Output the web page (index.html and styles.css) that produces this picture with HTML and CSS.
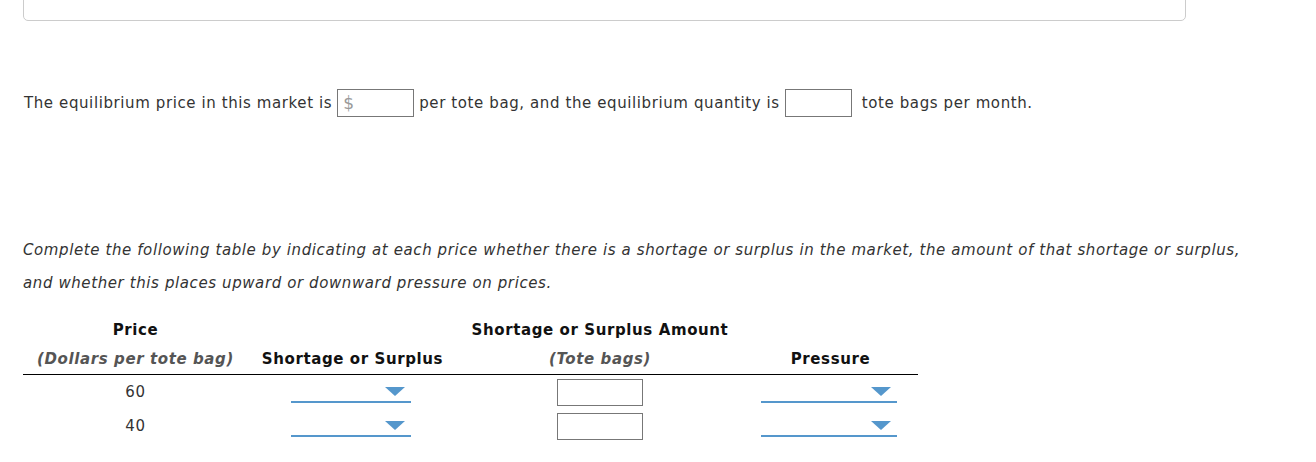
FILE: index.html
```html
<!DOCTYPE html>
<html>
<head>
<meta charset="utf-8">
<link rel="stylesheet" href="styles.css">
</head>
<body>
<div class="page">
  <div class="topbox"></div>
  <div class="sentence">
    <span>The equilibrium price in this market is</span>
    <span class="inp money">$</span>
    <span>per tote bag, and the equilibrium quantity is</span>
    <span class="inp qty"></span>
    <span class="after">tote bags per month.</span>
  </div>
  <p class="instr">Complete the following table by indicating at each price whether there is a shortage or surplus in the market, the amount of that shortage or surplus, and whether this places upward or downward pressure on prices.</p>
  <table class="grid">
    <thead>
      <tr class="h1">
        <th class="c1">Price</th>
        <th class="c2"></th>
        <th class="c3">Shortage or Surplus Amount</th>
        <th class="c4"></th>
      </tr>
      <tr class="h2">
        <th class="c1 unit">(Dollars per tote bag)</th>
        <th class="c2">Shortage or Surplus</th>
        <th class="c3 unit">(Tote bags)</th>
        <th class="c4">Pressure</th>
      </tr>
    </thead>
    <tbody>
      <tr>
        <td class="c1">60</td>
        <td class="c2"><div class="dd dd2"><span class="tri"></span></div></td>
        <td class="c3"><div class="box"></div></td>
        <td class="c4"><div class="dd dd4"><span class="tri"></span></div></td>
      </tr>
      <tr>
        <td class="c1">40</td>
        <td class="c2"><div class="dd dd2"><span class="tri"></span></div></td>
        <td class="c3"><div class="box"></div></td>
        <td class="c4"><div class="dd dd4"><span class="tri"></span></div></td>
      </tr>
    </tbody>
  </table>
</div>
</body>
</html>
```

FILE: styles.css
```css
html, body {
  margin: 0;
  padding: 0;
  background: #fff;
}
body {
  font-family: "DejaVu Sans", Verdana, sans-serif;
  font-size: 15px;
  letter-spacing: 0.6px;
  color: #333;
}
.page {
  padding-left: 23px;
  width: 1163px;
}
.topbox {
  margin-top: -20px;
  height: 39px;
  border: 1px solid #ccc;
  border-radius: 5px;
  width: 1161px;
}
.sentence {
  display: flex;
  align-items: center;
  margin-top: 68px;
  height: 28px;
  white-space: nowrap;
}
.sentence > span:first-child {
  margin-left: 1px;
}
.inp {
  display: inline-block;
  box-sizing: border-box;
  height: 28px;
  border: 1px solid #777;
  margin: 0 5px;
  line-height: 26px;
}
.money {
  width: 77px;
  color: #999;
  font-size: 17px;
  padding-left: 5px;
  margin-left: 5px;
}
.qty {
  width: 67px;
  margin-left: 5px;
}
.after {
  margin-left: 5px;
}
.instr {
  margin: 117px 0 0 0;
  font-style: italic;
  line-height: 33px;
  color: #333;
  width: 1240px;
}
.grid {
  border-collapse: collapse;
  margin-top: 15px;
  width: 895px;
}
.grid th {
  font-weight: bold;
  color: #111;
  padding: 0;
  text-align: center;
  vertical-align: middle;
}
.h1 th {
  height: 29px;
}
.h2 th {
  height: 30px;
  border-bottom: 1px solid #000;
}
.grid th.unit {
  font-style: italic;
  color: #555;
}
.c1 { width: 225px; }
.c2 { width: 209px; }
.c3 { width: 286px; }
.c4 { width: 175px; }
.grid td {
  padding: 0;
  height: 34px;
  text-align: center;
  vertical-align: middle;
}
.dd {
  position: relative;
  height: 22px;
  border-bottom: 2px solid #5597cc;
  box-sizing: border-box;
}
.dd2 {
  width: 120px;
  margin-left: 43px;
}
.dd4 {
  width: 136px;
  margin-left: 18px;
}
.tri {
  position: absolute;
  right: 6px;
  top: 6px;
  width: 0;
  height: 0;
  border-left: 10px solid transparent;
  border-right: 10px solid transparent;
  border-top: 9px solid #5597cc;
}
.box {
  box-sizing: border-box;
  width: 86px;
  height: 27px;
  border: 1px solid #777;
  margin-left: 100px;
}
```
